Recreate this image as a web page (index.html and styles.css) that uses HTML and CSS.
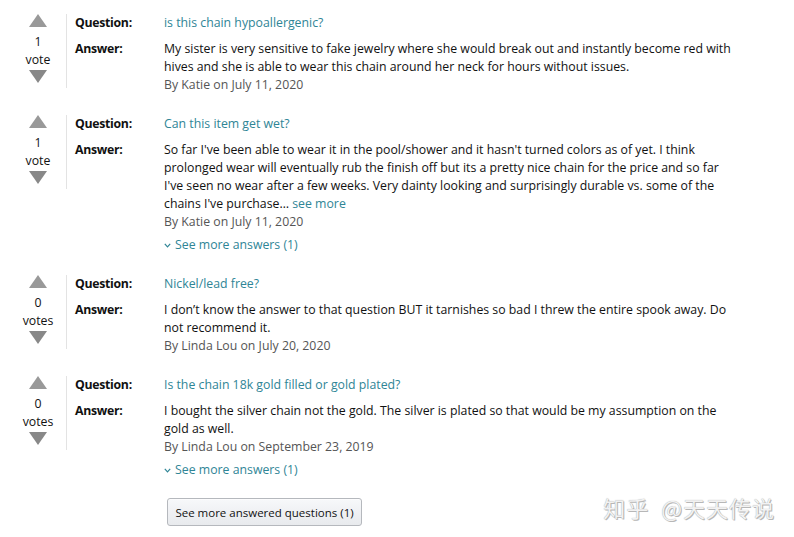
FILE: index.html
```html
<!DOCTYPE html>
<html>
<head>
<meta charset="utf-8">
<link rel="stylesheet" href="styles.css">
</head>
<body>
<div class="page">
  <div class="qa-block">
    <div class="vote">
      <svg class="arrow" width="18" height="13" viewBox="0 0 18 13"><polygon points="9,0 18,13 0,13" fill="#999"/></svg>
      <div class="count">1</div>
      <div class="unit">vote</div>
      <svg class="arrow down" width="18" height="13" viewBox="0 0 18 13"><polygon points="0,0 18,0 9,13" fill="#888"/></svg>
    </div>
    <div class="qa">
      <div class="label q">Question:</div>
      <div class="question"><a href="#">is this chain hypoallergenic?</a></div>
      <div class="label">Answer:</div>
      <div class="answer">
        <p>My sister is very sensitive to fake jewelry where she would break out and instantly become red with<br>hives and she is able to wear this chain around her neck for hours without issues.</p>
        <p class="by">By Katie on July 11, 2020</p>
      </div>
    </div>
  </div>

  <div class="qa-block">
    <div class="vote">
      <svg class="arrow" width="18" height="13" viewBox="0 0 18 13"><polygon points="9,0 18,13 0,13" fill="#999"/></svg>
      <div class="count">1</div>
      <div class="unit">vote</div>
      <svg class="arrow down" width="18" height="13" viewBox="0 0 18 13"><polygon points="0,0 18,0 9,13" fill="#888"/></svg>
    </div>
    <div class="qa">
      <div class="label q">Question:</div>
      <div class="question"><a href="#">Can this item get wet?</a></div>
      <div class="label">Answer:</div>
      <div class="answer">
        <p>So far I've been able to wear it in the pool/shower and it hasn't turned colors as of yet. I think<br>prolonged wear will eventually rub the finish off but its a pretty nice chain for the price and so far<br>I've seen no wear after a few weeks. Very dainty looking and surprisingly durable vs. some of the<br>chains I've purchase… <a href="#">see more</a></p>
        <p class="by">By Katie on July 11, 2020</p>
        <a class="more" href="#"><svg width="7" height="5" viewBox="0 0 7 5"><polyline points="0.8,0.8 3.5,3.8 6.2,0.8" fill="none" stroke="#2f8596" stroke-width="1.2"/></svg>See more answers (1)</a>
      </div>
    </div>
  </div>

  <div class="qa-block">
    <div class="vote">
      <svg class="arrow" width="18" height="13" viewBox="0 0 18 13"><polygon points="9,0 18,13 0,13" fill="#999"/></svg>
      <div class="count">0</div>
      <div class="unit">votes</div>
      <svg class="arrow down" width="18" height="13" viewBox="0 0 18 13"><polygon points="0,0 18,0 9,13" fill="#888"/></svg>
    </div>
    <div class="qa">
      <div class="label q">Question:</div>
      <div class="question"><a href="#">Nickel/lead free?</a></div>
      <div class="label">Answer:</div>
      <div class="answer">
        <p>I don’t know the answer to that question BUT it tarnishes so bad I threw the entire spook away. Do<br>not recommend it.</p>
        <p class="by">By Linda Lou on July 20, 2020</p>
      </div>
    </div>
  </div>

  <div class="qa-block">
    <div class="vote">
      <svg class="arrow" width="18" height="13" viewBox="0 0 18 13"><polygon points="9,0 18,13 0,13" fill="#999"/></svg>
      <div class="count">0</div>
      <div class="unit">votes</div>
      <svg class="arrow down" width="18" height="13" viewBox="0 0 18 13"><polygon points="0,0 18,0 9,13" fill="#888"/></svg>
    </div>
    <div class="qa">
      <div class="label q">Question:</div>
      <div class="question"><a href="#">Is the chain 18k gold filled or gold plated?</a></div>
      <div class="label">Answer:</div>
      <div class="answer">
        <p>I bought the silver chain not the gold. The silver is plated so that would be my assumption on the<br>gold as well.</p>
        <p class="by">By Linda Lou on September 23, 2019</p>
        <a class="more" href="#"><svg width="7" height="5" viewBox="0 0 7 5"><polyline points="0.8,0.8 3.5,3.8 6.2,0.8" fill="none" stroke="#2f8596" stroke-width="1.2"/></svg>See more answers (1)</a>
      </div>
    </div>
  </div>

  <div class="footer">
    <button class="btn">See more answered questions (1)</button>
  </div>

  <div class="watermark"><span>知乎</span><span class="handle">@天天传说</span></div>
</div>
</body>
</html>
```

FILE: styles.css
```css
html, body {
  margin: 0;
  padding: 0;
  background: #fff;
}
body {
  font-family: "Open Sans", "Noto Sans", sans-serif;
  font-size: 12.3px;
  line-height: 18px;
  color: #111;
}
.page {
  position: relative;
  width: 794px;
  height: 537px;
  padding-top: 14px;
  box-sizing: border-box;
  overflow: hidden;
}
.qa-block {
  display: flex;
  align-items: flex-start;
  margin-bottom: 21px;
}
.vote {
  width: 28px;
  margin-left: 24px;
  margin-right: 14px;
  display: flex;
  flex-direction: column;
  align-items: center;
  height: 74px;
  position: relative;
}
.vote::after {
  content: "";
  position: absolute;
  right: -15px;
  top: 0;
  bottom: 0;
  border-right: 1px solid #e3e3e3;
}
.arrow { display: block; }
.arrow:first-child { margin-bottom: 6px; }
.arrow.down { margin-top: 1px; }
.count, .unit {
  line-height: 18px;
  font-size: 12.3px;
  color: #111;
  text-align: center;
}
.qa {
  margin-left: 9px;
  display: grid;
  grid-template-columns: 89px 1fr;
  row-gap: 8px;
}
.label {
  font-weight: 700;
  color: #111;
  letter-spacing: -0.3px;
}
a {
  color: #2f8596;
  text-decoration: none;
}
.answer p {
  margin: 0;
  white-space: nowrap;
}
.by {
  color: #555;
}
.more {
  display: flex;
  align-items: center;
  margin-top: 5px;
}
.more svg {
  margin-right: 4px;
  margin-top: 1px;
}
.footer {
  padding-left: 167px;
  margin-top: -2px;
}
.btn {
  font-family: "Open Sans", "Noto Sans", sans-serif;
  font-size: 11.5px;
  color: #111;
  height: 28px;
  width: 195px;
  padding: 0;
  border: 1px solid #b5b8bd;
  border-radius: 3px;
  background: linear-gradient(#f7f8fa, #e8eaed);
  box-shadow: 0 1px 0 rgba(255,255,255,.6) inset;
}
.watermark {
  position: absolute;
  right: 19px;
  bottom: 18px;
  display: flex;
  gap: 12px;
  font-family: "Noto Sans CJK SC", sans-serif;
  font-size: 22px;
  line-height: 24px;
  color: #f2f2f2;
  text-shadow: 0 0 1px #999, 1px 1px 0 #bbb;
}
.watermark span {
  letter-spacing: 1px;
}
```
